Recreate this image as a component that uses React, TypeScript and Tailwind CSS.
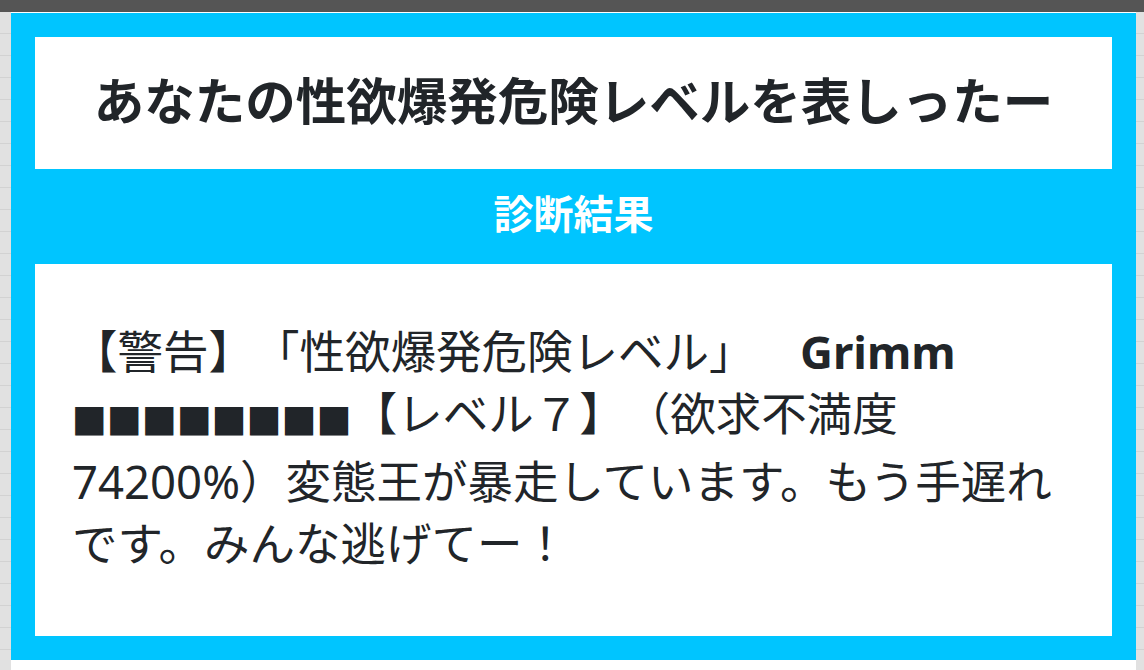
import React from "react";

const jp = { fontFamily: '"Noto Sans", "Noto Sans CJK JP", sans-serif' };
const squares = { fontFamily: '"DejaVu Sans", sans-serif' };

export default function App() {
  return (
    <div className="flex h-[670px] w-[1144px] flex-col overflow-hidden bg-white" style={jp}>
      {/* browser chrome strip */}
      <div className="h-[12px] shrink-0 bg-[#555555]" />
      <div className="flex flex-1">
        <div className="w-[11px] shrink-0 bg-[#e1e1e1] bg-[repeating-linear-gradient(to_bottom,transparent_0,transparent_21px,#d2d2d2_21px,#d2d2d2_22px)]" />
        <div className="flex w-[1125px] shrink-0 flex-col bg-white pt-px">
          <div className="flex h-[647px] flex-col bg-[#00c5ff] p-[24px]">
            <div className="flex h-[132px] shrink-0 items-center justify-center bg-white pb-[3px]">
              <h1 className="text-[50.5px] font-bold leading-none text-[#212529]">
                あなたの性欲爆発危険レベルを表しったー
              </h1>
            </div>
            <div className="flex h-[95px] shrink-0 items-center justify-center pb-[5px]">
              <h2 className="text-[40px] font-bold leading-none text-white">診断結果</h2>
            </div>
            <div className="flex-1 bg-white px-[37px] pt-[56px]">
              <p className="text-[45.5px] leading-[62px] text-[#212529] [text-spacing-trim:space-all]">
                【警告】「性欲爆発危険レベル」　<b>Grimm</b>{" "}
                <span className="text-[37px]" style={squares}>
                  ■■■■■■■■
                </span>
                【レベル７】（欲求不満度74200%）変態王が暴走しています。もう手遅れです。みんな逃げてー！
              </p>
            </div>
          </div>
        </div>
        <div className="flex-1 bg-[#e1e1e1] bg-[repeating-linear-gradient(to_bottom,transparent_0,transparent_21px,#d2d2d2_21px,#d2d2d2_22px)]" />
      </div>
    </div>
  );
}
